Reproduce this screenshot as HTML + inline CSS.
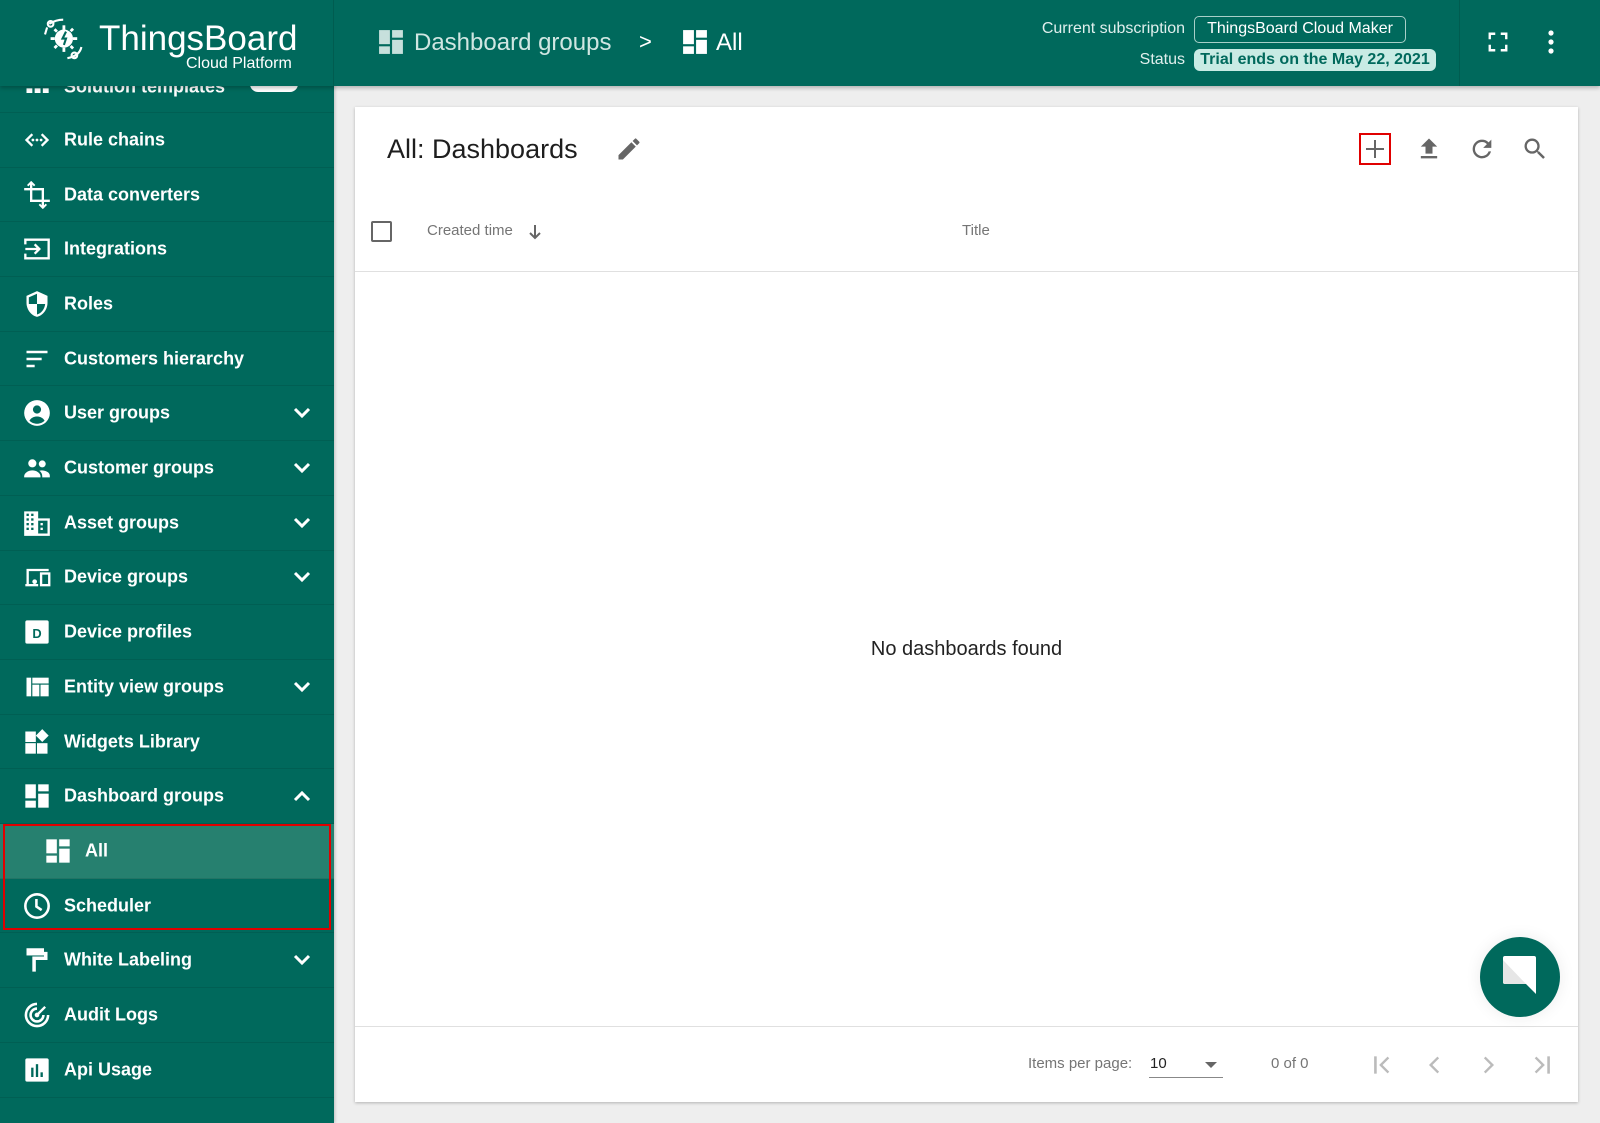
<!DOCTYPE html>
<html><head><meta charset="utf-8"><style>
*{box-sizing:border-box;margin:0;padding:0}
body{width:1600px;height:1123px;overflow:hidden;background:#eeeeee;font-family:"Liberation Sans",Arial,sans-serif;position:relative}
.hdr{position:absolute;left:0;top:0;width:1600px;height:86px;background:#00695c;box-shadow:0 2px 4px rgba(0,0,0,.25);z-index:5}
.side{position:absolute;left:0;top:0;width:334px;height:1123px;background:#00695c;box-shadow:1px 0 3px rgba(0,0,0,.2);overflow:hidden}
.row{position:absolute;left:0;width:334px;height:54.7px;border-bottom:1px solid rgba(0,0,0,.09);color:#fff;font-weight:bold;font-size:18px}
.row .t{position:absolute;left:64px;top:50%;transform:translateY(-50%);white-space:nowrap}
.row svg.i{position:absolute;left:23px;top:50%;margin-top:-14px;width:28px;height:28px}
.row .ch{position:absolute;left:292px;top:50%;margin-top:-9px;width:20px;height:18px}
.abs{position:absolute;white-space:nowrap}
.card{position:absolute;left:355px;top:107px;width:1223px;height:995px;background:#fff;box-shadow:0 1px 3px rgba(0,0,0,.25)}
</style></head><body>

<div class="side">
<div class="row" style="top:60px;height:53px"><svg class="i" viewBox="0 0 24 24"><g fill="#fff"><rect x="3" y="8" width="5" height="4"/><rect x="10" y="8" width="5" height="4"/><rect x="17" y="8" width="5" height="4"/><rect x="3" y="14" width="5" height="4"/><rect x="10" y="14" width="5" height="4"/><rect x="17" y="14" width="5" height="4"/></g></svg><span class="t" style="top:52%">Solution templates</span><div class="abs" style="left:250px;top:16px;width:48px;height:16px;border-radius:8px;background:#fff"></div></div>
</div>
<div class="side" style="background:transparent;box-shadow:none;z-index:2" id="s2">
<div class="row" style="top:113px"><svg class="i" viewBox="0 0 24 24"><path d="M8 7l-5 5 5 5M16 7l5 5-5 5" stroke="#fff" stroke-width="2" fill="none"/><circle cx="8.5" cy="12" r="1.2" fill="#fff"/><circle cx="12" cy="12" r="1.2" fill="#fff"/><circle cx="15.5" cy="12" r="1.2" fill="#fff"/></svg><span class="t">Rule chains</span></div>
<div class="row" style="top:167.7px"><svg class="i" viewBox="0 0 24 24"><path d="M7 1v16h16M1 7h16v16" stroke="#fff" stroke-width="2" fill="none"/><path d="M4 4l3-3 3 3M14 20l3 3 3-3" stroke="#fff" stroke-width="1.6" fill="none"/></svg><span class="t">Data converters</span></div>
<div class="row" style="top:222.4px"><svg class="i" viewBox="0 0 24 24"><path d="M2 8V4h20v16H2v-4" stroke="#fff" stroke-width="2" fill="none"/><path d="M2 12h12M10 8l4 4-4 4" stroke="#fff" stroke-width="2" fill="none"/></svg><span class="t">Integrations</span></div>
<div class="row" style="top:277.1px"><svg class="i" viewBox="0 0 24 24"><path d="M12 1L3 5v6c0 5.5 3.8 10.7 9 12 5.2-1.3 9-6.5 9-12V5z" fill="#fff"/><path d="M12 3.2v8.8H5V6.3zM12 12h7c-.5 4.3-3.3 8-7 9z" fill="#00695c"/></svg><span class="t">Roles</span></div>
<div class="row" style="top:331.8px"><svg class="i" viewBox="0 0 24 24"><path d="M3 6h18M3 12h13M3 18h7" stroke="#fff" stroke-width="2.2"/></svg><span class="t">Customers hierarchy</span></div>
<div class="row" style="top:386.5px"><svg class="i" viewBox="0 0 24 24"><circle cx="12" cy="12" r="11" fill="#fff"/><circle cx="12" cy="9" r="3.5" fill="#00695c"/><path d="M5.5 18.5c1.5-2.5 4-3.5 6.5-3.5s5 1 6.5 3.5c-1.7 1.7-4 2.7-6.5 2.7s-4.8-1-6.5-2.7z" fill="#00695c"/></svg><span class="t">User groups</span><svg class="ch" viewBox="0 0 20 18"><path d="M3 5l7 7 7-7" stroke="#fff" stroke-width="3" fill="none"/></svg></div>
<div class="row" style="top:441.2px"><svg class="i" viewBox="0 0 24 24"><g fill="#fff"><circle cx="8" cy="8" r="3.5"/><circle cx="16.5" cy="8.5" r="3"/><path d="M1 19c0-3 4-5 7-5s7 2 7 5v1H1z"/><path d="M16 14c3 0 7 1.5 7 4.5v1.5h-6.5v-1c0-2-1-3.5-2.5-4.6z"/></g></svg><span class="t">Customer groups</span><svg class="ch" viewBox="0 0 20 18"><path d="M3 5l7 7 7-7" stroke="#fff" stroke-width="3" fill="none"/></svg></div>
<div class="row" style="top:495.9px"><svg class="i" viewBox="0 0 24 24"><path d="M1 2h12v6h10v15H1z" fill="#fff"/><g fill="#00695c"><rect x="3" y="4" width="2" height="2"/><rect x="7" y="4" width="2" height="2"/><rect x="3" y="8" width="2" height="2"/><rect x="7" y="8" width="2" height="2"/><rect x="3" y="12" width="2" height="2"/><rect x="7" y="12" width="2" height="2"/><rect x="3" y="16" width="2" height="2"/><rect x="7" y="16" width="2" height="2"/><rect x="13" y="10" width="8" height="11"/></g><g fill="#fff"><rect x="15" y="12" width="2" height="2"/><rect x="15" y="16" width="2" height="2"/></g></svg><span class="t">Asset groups</span><svg class="ch" viewBox="0 0 20 18"><path d="M3 5l7 7 7-7" stroke="#fff" stroke-width="3" fill="none"/></svg></div>
<div class="row" style="top:550.6px"><svg class="i" viewBox="0 0 24 24"><path d="M4 19V6h18" stroke="#fff" stroke-width="2" fill="none"/><path d="M2 19h11" stroke="#fff" stroke-width="2"/><circle cx="10" cy="16" r="2" fill="#fff"/><rect x="15.5" y="9" width="7" height="10" fill="none" stroke="#fff" stroke-width="2"/></svg><span class="t">Device groups</span><svg class="ch" viewBox="0 0 20 18"><path d="M3 5l7 7 7-7" stroke="#fff" stroke-width="3" fill="none"/></svg></div>
<div class="row" style="top:605.3px"><svg class="i" viewBox="0 0 24 24"><rect x="2" y="2" width="20" height="20" rx="1.5" fill="#fff"/><text x="12" y="17" font-size="11" font-weight="bold" text-anchor="middle" fill="#00695c" font-family="Liberation Sans">D</text></svg><span class="t">Device profiles</span></div>
<div class="row" style="top:660px"><svg class="i" viewBox="0 0 24 24"><g fill="#fff"><rect x="3" y="4" width="4" height="16"/><rect x="8" y="4" width="14" height="5"/><rect x="8" y="10" width="6" height="10"/><rect x="15" y="10" width="7" height="10"/></g></svg><span class="t">Entity view groups</span><svg class="ch" viewBox="0 0 20 18"><path d="M3 5l7 7 7-7" stroke="#fff" stroke-width="3" fill="none"/></svg></div>
<div class="row" style="top:714.7px"><svg class="i" viewBox="0 0 24 24"><g fill="#fff"><rect x="2" y="3" width="9" height="9"/><rect x="2" y="13" width="9" height="9"/><rect x="12" y="13" width="9" height="9"/><path d="M16.5 1l5.5 5.5-5.5 5.5-5.5-5.5z"/></g></svg><span class="t">Widgets Library</span></div>
<div class="row" style="top:769.4px"><svg class="i" viewBox="0 0 24 24"><g fill="#fff"><rect x="2" y="2" width="9" height="12"/><rect x="13" y="2" width="9" height="6"/><rect x="13" y="10" width="9" height="12"/><rect x="2" y="16" width="9" height="6"/></g></svg><span class="t">Dashboard groups</span><svg class="ch" viewBox="0 0 20 18"><path d="M3 13l7-7 7 7" stroke="#fff" stroke-width="3" fill="none"/></svg></div>
<div class="row" style="top:824.1px;background:#26806f"><svg class="i" viewBox="0 0 24 24" style="left:44px"><g fill="#fff"><rect x="2" y="2" width="9" height="12"/><rect x="13" y="2" width="9" height="6"/><rect x="13" y="10" width="9" height="12"/><rect x="2" y="16" width="9" height="6"/></g></svg><span class="t" style="left:85px">All</span></div>
<div class="row" style="top:878.8px"><svg class="i" viewBox="0 0 24 24"><circle cx="12" cy="12" r="10" stroke="#fff" stroke-width="2.2" fill="none"/><path d="M11.5 6v6.5l4.5 3" stroke="#fff" stroke-width="2.2" fill="none"/></svg><span class="t">Scheduler</span></div>
<div class="row" style="top:933.5px"><svg class="i" viewBox="0 0 24 24"><path d="M3 2h15v3h3v7H11v10H8V9h10V7H18v1H3z" fill="#fff"/><rect x="3" y="2" width="15" height="6" fill="#fff"/></svg><span class="t">White Labeling</span><svg class="ch" viewBox="0 0 20 18"><path d="M3 5l7 7 7-7" stroke="#fff" stroke-width="3" fill="none"/></svg></div>
<div class="row" style="top:988.2px"><svg class="i" viewBox="0 0 24 24"><path d="M12 2.5a9.5 9.5 0 1 0 9.5 9.5" stroke="#fff" stroke-width="2.2" fill="none"/><path d="M12 6.5a5.5 5.5 0 1 0 5.5 5.5" stroke="#fff" stroke-width="2.2" fill="none"/><circle cx="12" cy="12" r="2" fill="#fff"/><path d="M12 12L19 5" stroke="#fff" stroke-width="2"/></svg><span class="t">Audit Logs</span></div>
<div class="row" style="top:1042.9px"><svg class="i" viewBox="0 0 24 24"><rect x="2" y="2" width="20" height="20" rx="1.5" fill="#fff"/><g fill="#00695c"><rect x="7" y="10" width="2" height="8"/><rect x="11" y="7" width="2" height="11"/><rect x="15" y="14" width="2" height="4"/></g></svg><span class="t">Api Usage</span></div>
<div style="position:absolute;left:3px;top:824px;width:328px;height:106px;border:2px solid #e00000"></div>
</div>

<div class="hdr">
<div style="position:absolute;left:0;top:0;width:334px;height:86px;border-right:1px solid rgba(0,0,0,.12)"></div>
<svg class="abs" style="left:38px;top:12px" width="56" height="56" viewBox="0 0 80 80"><g stroke="#fff" stroke-width="3" fill="none"><path d="M16 17c8-5 14-6 20-6"/><circle cx="18" cy="17" r="4"/><path d="M13 22l-3 10"/><path d="M62 50c-2 10-10 14-20 16"/><circle cx="52" cy="62" r="4"/></g><g fill="#fff"><circle cx="37" cy="38" r="13"/><rect x="35" y="19" width="4" height="6"/><rect x="35" y="51" width="4" height="6"/><rect x="18" y="36" width="6" height="4"/><rect x="50" y="36" width="6" height="4"/><rect x="23" y="24" width="5" height="4" transform="rotate(45 25 26)"/><rect x="46" y="48" width="5" height="4" transform="rotate(45 48 50)"/><rect x="46" y="24" width="5" height="4" transform="rotate(-45 48 26)"/><rect x="23" y="48" width="5" height="4" transform="rotate(-45 25 50)"/></g><path d="M40 28l-5 10h5l-3 9" stroke="#00695c" stroke-width="3" fill="none"/></svg>
<div class="abs" style="left:99px;top:19px;color:#fff;font-size:35px">ThingsBoard</div>
<div class="abs" style="left:186px;top:55px;color:#fff;font-size:16px">Cloud Platform</div>
<svg class="abs" style="left:378px;top:29px" width="26" height="26" viewBox="0 0 24 24"><g fill="#c7e0dc"><rect x="1" y="1" width="10" height="13"/><rect x="13" y="1" width="10" height="7"/><rect x="13" y="10" width="10" height="13"/><rect x="1" y="16" width="10" height="7"/></g></svg>
<div class="abs" style="left:414px;top:29px;color:#d0e6e2;font-size:24px">Dashboard groups</div>
<div class="abs" style="left:639px;top:29px;color:#fff;font-size:22px">&gt;</div>
<svg class="abs" style="left:682px;top:29px" width="26" height="26" viewBox="0 0 24 24"><g fill="#fff"><rect x="1" y="1" width="10" height="13"/><rect x="13" y="1" width="10" height="7"/><rect x="13" y="10" width="10" height="13"/><rect x="1" y="16" width="10" height="7"/></g></svg>
<div class="abs" style="left:716px;top:29px;color:#fff;font-size:24px">All</div>
<div class="abs" style="right:415px;top:20px;color:#e0efed;font-size:16px">Current subscription</div>
<div class="abs" style="left:1194px;top:16px;width:212px;height:27px;border:1.5px solid #a8cfc8;border-radius:5px;color:#fff;font-size:16px;text-align:center;line-height:24px">ThingsBoard Cloud Maker</div>
<div class="abs" style="right:415px;top:51px;color:#e0efed;font-size:16px">Status</div>
<div class="abs" style="left:1194px;top:49px;width:242px;height:22px;background:#c8ebe4;border-radius:6px;color:#00695c;font-size:16px;font-weight:bold;text-align:center;line-height:22px">Trial ends on the May 22, 2021</div>
<div style="position:absolute;left:1459px;top:0;width:1px;height:86px;background:rgba(0,0,0,.12)"></div>
<svg class="abs" style="left:1487px;top:31px" width="22" height="22" viewBox="0 0 24 24"><path d="M3 9V3h6M15 3h6v6M21 15v6h-6M9 21H3v-6" stroke="#fff" stroke-width="2.6" fill="none"/></svg>
<svg class="abs" style="left:1541px;top:29px" width="20" height="26" viewBox="0 0 20 26"><g fill="#fff"><circle cx="10" cy="4" r="2.6"/><circle cx="10" cy="13" r="2.6"/><circle cx="10" cy="22" r="2.6"/></g></svg>
</div>

<div class="card">
<div class="abs" style="left:32px;top:27px;font-size:27px;color:#1e1e1e">All: Dashboards</div>
<svg class="abs" style="left:260px;top:28px" width="28" height="28" viewBox="0 0 24 24"><path d="M3 17.25V21h3.75L17.8 9.94l-3.75-3.75zM20.7 7.04a1 1 0 0 0 0-1.41l-2.34-2.34a1 1 0 0 0-1.41 0l-1.830 1.83 3.75 3.75z" fill="#666"/></svg>
<div class="abs" style="left:1004px;top:26px;width:32px;height:32px;border:2.5px solid #e00000"></div>
<svg class="abs" style="left:1008px;top:30px" width="24" height="24" viewBox="0 0 24 24"><path d="M12 3v18M3 12h18" stroke="#666" stroke-width="2"/></svg>
<svg class="abs" style="left:1060px;top:28px" width="28" height="28" viewBox="0 0 24 24"><path d="M9 16h6v-6h4l-7-7-7 7h4zM5 18h14v2H5z" fill="#666"/></svg>
<svg class="abs" style="left:1113px;top:28px" width="28" height="28" viewBox="0 0 24 24"><path d="M17.65 6.35A7.96 7.96 0 0 0 12 4a8 8 0 1 0 7.73 10h-2.08A6 6 0 1 1 12 6c1.66 0 3.14.69 4.22 1.78L13 11h7V4z" fill="#666"/></svg>
<svg class="abs" style="left:1166px;top:28px" width="28" height="28" viewBox="0 0 24 24"><path d="M15.5 14h-.79l-.28-.27A6.47 6.47 0 0 0 16 9.5 6.5 6.5 0 1 0 9.5 16c1.610 0 3.090-.59 4.23-1.57l.27.28v.79l5 4.99L20.49 19zm-6 0C7.01 14 5 11.99 5 9.5S7.01 5 9.5 5 14 7.01 14 9.5 11.99 14 9.5 14z" fill="#666"/></svg>
<div class="abs" style="left:16px;top:114px;width:21px;height:21px;border:2px solid #666;border-radius:2px"></div>
<div class="abs" style="left:72px;top:115px;font-size:15px;color:#757575">Created time</div>
<svg class="abs" style="left:172px;top:116px" width="16" height="18" viewBox="0 0 16 18"><path d="M8 2v13M3 10l5 5 5-5" stroke="#666" stroke-width="2" fill="none"/></svg>
<div class="abs" style="left:607px;top:115px;font-size:15px;color:#757575">Title</div>
<div class="abs" style="left:0;top:164px;width:1223px;height:1px;background:#e0e0e0"></div>
<div class="abs" style="left:0;top:531px;width:1223px;text-align:center;font-size:20px;color:#222">No dashboards found</div>
<div class="abs" style="left:0;top:919px;width:1223px;height:1px;background:#e0e0e0"></div>
<div class="abs" style="left:673px;top:948px;font-size:15px;color:#757575">Items per page:</div>
<div class="abs" style="left:795px;top:948px;font-size:15px;color:#222">10</div>
<div class="abs" style="left:794px;top:970px;width:74px;height:1px;background:#888"></div>
<svg class="abs" style="left:849px;top:954px" width="14" height="8" viewBox="0 0 14 8"><path d="M1 1h12L7 7z" fill="#666"/></svg>
<div class="abs" style="left:916px;top:948px;font-size:15px;color:#757575">0 of 0</div>
<svg class="abs" style="left:1015px;top:945px" width="26" height="26" viewBox="0 0 24 24"><path d="M5 4v16" stroke="#bbb" stroke-width="2.4"/><path d="M17 5l-7 7 7 7" stroke="#bbb" stroke-width="2.2" fill="none"/></svg>
<svg class="abs" style="left:1067px;top:945px" width="26" height="26" viewBox="0 0 24 24"><path d="M15 5l-7 7 7 7" stroke="#bbb" stroke-width="2.2" fill="none"/></svg>
<svg class="abs" style="left:1120px;top:945px" width="26" height="26" viewBox="0 0 24 24"><path d="M9 5l7 7-7 7" stroke="#bbb" stroke-width="2.2" fill="none"/></svg>
<svg class="abs" style="left:1173px;top:945px" width="26" height="26" viewBox="0 0 24 24"><path d="M7 5l7 7-7 7" stroke="#bbb" stroke-width="2.2" fill="none"/><path d="M19 4v16" stroke="#bbb" stroke-width="2.4"/></svg>
</div>

<div class="abs" style="left:1480px;top:937px;width:80px;height:80px;border-radius:50%;background:#00695c;box-shadow:0 0 16px rgba(0,0,0,.08)"></div>
<svg class="abs" style="left:1500px;top:954px" width="40" height="44" viewBox="0 0 40 44"><path d="M3 4a2 2 0 0 1 2-2h29a2 2 0 0 1 2 2v36l-10-10H5a2 2 0 0 1-2-2z" fill="#fff"/><path d="M3 6L26 30H5a2 2 0 0 1-2-2z" fill="#e6e6e6"/></svg>
</body></html>
